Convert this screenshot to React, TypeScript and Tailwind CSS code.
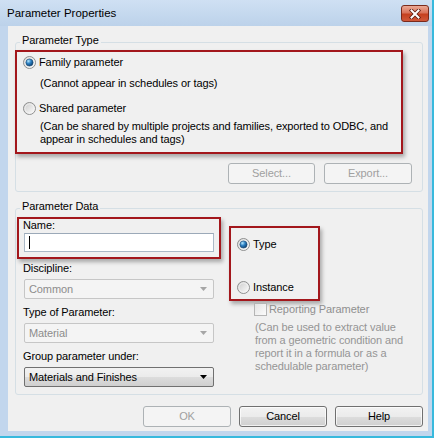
import { useId, type ReactNode } from "react";

const txt = "text-[11px] leading-[13px] tracking-[-0.1px]";
const redBox =
  "border-2 border-[#a3171c] shadow-[2px_3px_4px_rgba(0,0,0,0.3)]";

function Radio({ checked }: { checked?: boolean }) {
  const id = useId().replace(/[^a-zA-Z0-9]/g, "");
  return (
    <svg width="13" height="13" viewBox="0 0 13 13" className="shrink-0">
      <defs>
        <linearGradient id={`${id}b`} x1="0" y1="0" x2="1" y2="1">
          <stop offset="0" stopColor="#c9c9c9" />
          <stop offset="1" stopColor="#ffffff" />
        </linearGradient>
        <radialGradient id={`${id}d`} cx="0.35" cy="0.3" r="0.8">
          <stop offset="0" stopColor="#b5e8ff" />
          <stop offset="0.45" stopColor="#2b7fc2" />
          <stop offset="1" stopColor="#0b355f" />
        </radialGradient>
      </defs>
      <circle cx="6.5" cy="6.5" r="6" fill={`url(#${id}b)`} stroke="#8e8f8f" />
      <circle cx="6.5" cy="6.5" r="4.6" fill="none" stroke="#f4f4f4" strokeWidth="0.8" />
      {checked && (
        <circle cx="6.5" cy="6.5" r="3.6" fill={`url(#${id}d)`} stroke="#1b4a74" strokeWidth="0.6" />
      )}
    </svg>
  );
}

function RadioRow({ checked, label, className = "" }: { checked?: boolean; label: string; className?: string }) {
  return (
    <div className={`flex items-center gap-[3px] h-[13px] ${className}`}>
      <Radio checked={checked} />
      <span className={txt}>{label}</span>
    </div>
  );
}

function Button({ children, disabled, w = "w-[88px]" }: { children: ReactNode; disabled?: boolean; w?: string }) {
  return (
    <div
      className={`${w} h-[21px] rounded-[3px] flex items-center justify-center ${txt} ${
        disabled
          ? "border border-[#adb2b5] bg-[#f4f4f4] text-[#a0a0a0]"
          : "border border-[#707070] bg-[linear-gradient(to_bottom,#f2f2f2_0%,#ebebeb_50%,#dddddd_50%,#cfcfcf_100%)] shadow-[inset_0_0_0_1px_rgba(255,255,255,0.7)] text-black"
      }`}
    >
      {children}
    </div>
  );
}

function Arrow({ color }: { color: string }) {
  return (
    <svg width="7" height="4" viewBox="0 0 7 4" className="shrink-0">
      <polygon points="0,0 7,0 3.5,4" fill={color} />
    </svg>
  );
}

function Combo({ value, disabled }: { value: string; disabled?: boolean }) {
  return (
    <div
      className={`ml-[7px] w-[190px] h-[20px] rounded-[2px] flex items-center justify-between pl-[4px] pr-[6px] ${txt} ${
        disabled
          ? "border border-[#c6c6c6] bg-[#f4f4f4] text-[#8c8c8c]"
          : "border border-[#707070] bg-[linear-gradient(to_bottom,#f2f2f2_0%,#ebebeb_50%,#dddddd_50%,#cfcfcf_100%)] text-black"
      }`}
    >
      <span>{value}</span>
      <Arrow color={disabled ? "#a6a6a6" : "#000"} />
    </div>
  );
}

function Label({ children, className = "" }: { children: ReactNode; className?: string }) {
  return <div className={`pl-[6px] ${txt} ${className}`}>{children}</div>;
}

export default function App() {
  return (
    <div className="w-[437px] h-[438px] bg-white font-['Liberation_Sans',Arial,sans-serif]">
      <div className="w-[434px] h-[438px] flex flex-col bg-[#c2d6ed] border-r-2 border-b-2 border-[#38b9dd]">
        {/* Title bar */}
        <div className="h-[26px] flex items-start justify-between pl-[7px] pr-[3px] bg-[linear-gradient(to_bottom,#cfe0f3,#bcd2ea)]">
          <span className="mt-[6px] text-[11.5px] leading-[15px] text-black">Parameter Properties</span>
          <div className="mt-[5px] w-[28px] h-[17px] rounded-[3px] border border-[#7a2a1c] bg-[linear-gradient(to_bottom,#eba996_0%,#d9735a_45%,#c5401f_55%,#d0583a_100%)] flex items-center justify-center">
            <svg width="12" height="10" viewBox="0 0 12 10">
              <path d="M2.5 1.5 L9.5 8.5 M9.5 1.5 L2.5 8.5" stroke="#5b1a0e" strokeWidth="3.6" strokeLinecap="square" />
              <path d="M2.5 1.5 L9.5 8.5 M9.5 1.5 L2.5 8.5" stroke="#ffffff" strokeWidth="2" strokeLinecap="square" />
            </svg>
          </div>
        </div>

        {/* Client area */}
        <div className="ml-[8px] mr-[4px] h-[405px] bg-[#f0f0f0] pl-[7px] pr-[5px] pt-[8px] text-black">
          <fieldset className="border border-[#d5dfe5] rounded-[3px] pb-[7px]">
            <legend className={`ml-[4px] px-[2px] pb-[3px] ${txt}`}>Parameter Type</legend>
            <div className={`-ml-px w-[388px] pt-[4px] pb-[6px] pl-[6px] ${redBox}`}>
              <RadioRow checked label="Family parameter" />
              <p className={`mt-[8px] pl-[17px] ${txt}`}>(Cannot appear in schedules or tags)</p>
              <RadioRow className="mt-[12px]" label="Shared parameter" />
              <p className={`mt-[5px] pl-[17px] ${txt}`}>
                (Can be shared by multiple projects and families, exported to ODBC, and
                <br />
                appear in schedules and tags)
              </p>
            </div>
            <div className="mt-[9px] flex justify-end gap-[9px] pr-[10px]">
              <Button disabled w="w-[87px]">Select...</Button>
              <Button disabled>Export...</Button>
            </div>
          </fieldset>

          <fieldset className="mt-[8px] border border-[#d5dfe5] rounded-[3px] pb-[7px]">
            <legend className={`ml-[4px] px-[2px] pb-[3px] ${txt}`}>Parameter Data</legend>
            <div className="flex items-start">
              <div className="ml-px w-[204px] mt-px">
                <div className={`pl-[4px] pb-[5px] ${redBox}`}>
                  <div className={txt}>Name:</div>
                  <div className="mt-px ml-px w-[190px] h-[19px] bg-white border border-[#abb9c7] border-t-[#9ba9b8] flex items-center">
                    <div className="ml-[4px] w-px h-[13px] bg-black" />
                  </div>
                </div>
                <Label className="mt-[3px]">Discipline:</Label>
                <div className="mt-[4px]">
                  <Combo disabled value="Common" />
                </div>
                <Label className="mt-[7px]">Type of Parameter:</Label>
                <div className="mt-[4px]">
                  <Combo disabled value="Material" />
                </div>
                <Label className="mt-[7px]">Group parameter under:</Label>
                <div className="mt-[4px]">
                  <Combo value="Materials and Finishes" />
                </div>
              </div>

              <div className="ml-[8px] mt-[10px]">
                <div className={`w-[91px] pt-[10px] pb-[5px] pl-[6px] ${redBox}`}>
                  <RadioRow checked label="Type" />
                  <RadioRow className="mt-[30px]" label="Instance" />
                </div>
                <div className="mt-[2px] ml-[25px] flex items-center gap-[2px] h-[13px]">
                  <div className="w-[13px] h-[13px] border border-[#b5b5b5] bg-[linear-gradient(135deg,#e4e4e4,#fbfbfb)]" />
                  <span className={`${txt} text-[#8f8f8f]`}>Reporting Parameter</span>
                </div>
                <p className={`mt-[5px] ml-[26px] ${txt} text-[#959595]`}>
                  (Can be used to extract value
                  <br />
                  from a geometric condition and
                  <br />
                  report it in a formula or as a
                  <br />
                  schedulable parameter)
                </p>
              </div>
            </div>
          </fieldset>

          <div className="mt-[11px] flex justify-end gap-[8px]">
            <Button disabled>OK</Button>
            <Button>Cancel</Button>
            <Button>Help</Button>
          </div>
        </div>
      </div>
    </div>
  );
}
